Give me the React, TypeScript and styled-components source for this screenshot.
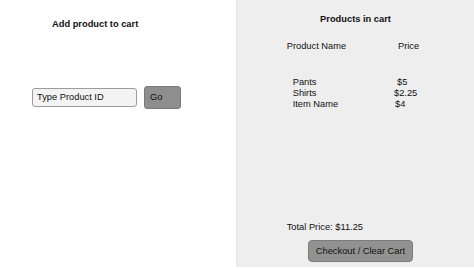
import styled, { createGlobalStyle } from "styled-components";

const GlobalStyle = createGlobalStyle`
    html, body{
        margin:0;
        padding:0;
        background:#ffffff;
    }
    body{
        font-family: "Liberation Sans", Arial, sans-serif;
        color:#111111;
    }
`;

const cartItems = [
    { name: "Pants", price: "$5", shift: 3 },
    { name: "Shirts", price: "$2.25", shift: 0 },
    { name: "Item Name", price: "$4", shift: 1 },
];

export default function App() {
    return (
        <>
            <GlobalStyle />
            <Page>
                <AddPanel>
                    <AddTitle>Add product to cart</AddTitle>
                    <AddRow>
                        <ProductInput placeholder="Type Product ID" />
                        <GoButton>Go</GoButton>
                    </AddRow>
                </AddPanel>

                <CartPanel>
                    <CartTitle>Products in cart</CartTitle>
                    <HeaderRow>
                        <HeaderName>Product Name</HeaderName>
                        <span>Price</span>
                    </HeaderRow>
                    <ItemList>
                        {cartItems.map((item) => (
                            <ItemRow key={item.name}>
                                <ItemName>{item.name}</ItemName>
                                <ItemPrice $shift={item.shift}>{item.price}</ItemPrice>
                            </ItemRow>
                        ))}
                    </ItemList>
                    <CartFooter>
                        <TotalPrice>Total Price: $11.25</TotalPrice>
                        <CheckoutButton>Checkout / Clear Cart</CheckoutButton>
                    </CartFooter>
                </CartPanel>
            </Page>
        </>
    );
}

const Page = styled.div`
    display: flex;
    width: 474px;
    height: 267px;
    font-size: 9.3px;
    line-height: 11px;
`;

const AddPanel = styled.div`
    width: 236px;
    display: flex;
    flex-direction: column;
    padding-top: 19.4px;
    box-sizing: border-box;
`;

const AddTitle = styled.h2`
    margin: 0 0 0 52px;
    font-size: 9.3px;
    line-height: 11px;
    font-weight: 700;
`;

const AddRow = styled.div`
    display: flex;
    align-items: center;
    gap: 7px;
    margin: 55.6px 0 0 32px;
`;

const ProductInput = styled.input`
    width: 105px;
    height: 19px;
    box-sizing: border-box;
    border: 1px solid #9c9c9c;
    border-radius: 3px;
    background: #f3f3f3;
    padding: 0 0 0 4px;
    font-family: "Liberation Sans", Arial, sans-serif;
    font-size: 9.3px;
    outline: none;
    &::placeholder{
        color:#111111;
        opacity: 1;
    }
`;

const GoButton = styled.button`
    width: 37px;
    height: 23px;
    box-sizing: border-box;
    border: 1px solid #7a7a7a;
    border-radius: 3px;
    background: #8e8e8e;
    color: #111111;
    text-align: left;
    padding: 0 0 0 5px;
    font-family: "Liberation Sans", Arial, sans-serif;
    font-size: 9.3px;
`;

const CartPanel = styled.div`
    flex: 1;
    display: flex;
    flex-direction: column;
    background: #eeeeee;
    border-left: 1px solid #e6e6e6;
    padding-top: 13.9px;
    box-sizing: border-box;
`;

const CartTitle = styled.h2`
    margin: 0;
    text-align: center;
    font-size: 9.3px;
    line-height: 11px;
    font-weight: 700;
`;

const HeaderRow = styled.div`
    display: flex;
    margin: 15.8px 0 0 49.7px;
`;

const HeaderName = styled.span`
    width: 111.3px;
`;

const ItemList = styled.div`
    display: flex;
    flex-direction: column;
    margin: 24.9px 0 0 55.7px;
`;

const ItemRow = styled.div`
    display: flex;
    line-height: 11.3px;
`;

const ItemName = styled.span`
    width: 101.3px;
`;

const ItemPrice = styled.span<{ $shift: number }>`
    padding-left: ${({ $shift }) => $shift}px;
`;

const CartFooter = styled.div`
    margin-top: auto;
    display: flex;
    flex-direction: column;
    padding: 0 0 5px 49.7px;
`;

const TotalPrice = styled.div`
    line-height: 11px;
`;

const CheckoutButton = styled.button`
    width: 105px;
    height: 22px;
    margin: 6.9px 0 0 21.3px;
    box-sizing: border-box;
    border: 1px solid #7c7c7c;
    border-radius: 4px;
    background: #929292;
    color: #111111;
    padding: 0;
    font-family: "Liberation Sans", Arial, sans-serif;
    font-size: 9.3px;
`;
